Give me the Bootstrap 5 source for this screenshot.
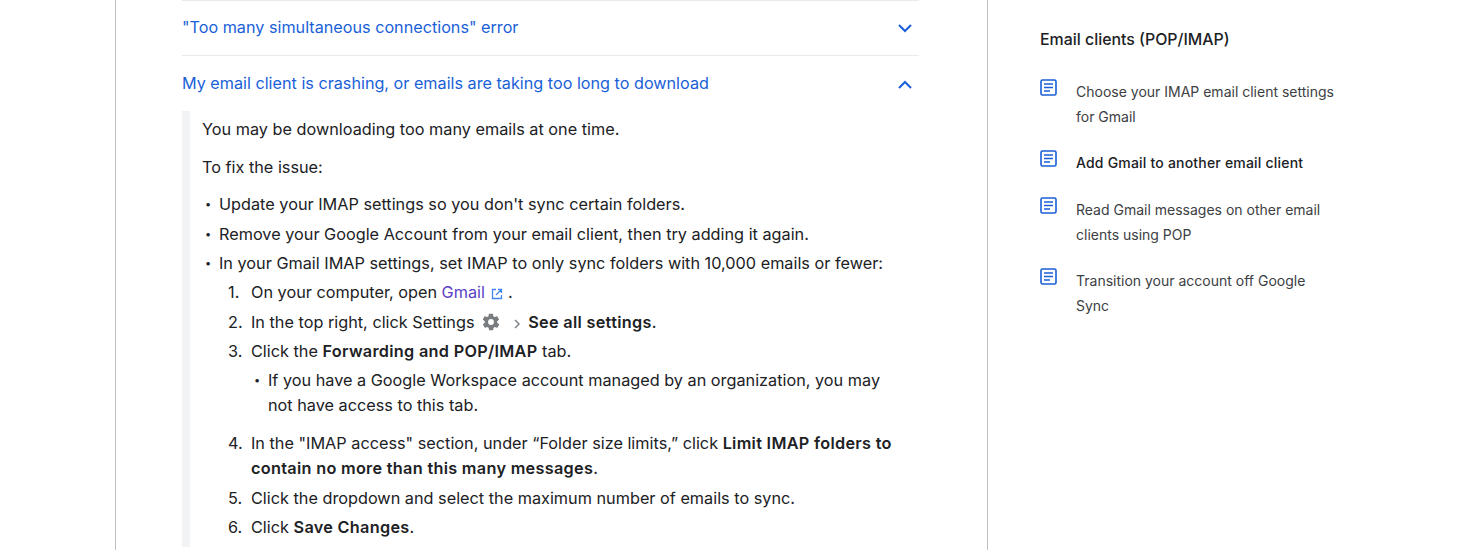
<!DOCTYPE html>
<html lang="en">
<head>
  <meta charset="UTF-8">
  <title>Email client help</title>
  <link href="https://cdn.jsdelivr.net/npm/bootstrap@5.3.3/dist/css/bootstrap.min.css" rel="stylesheet">
  <style>
    html, body { height: 550px; overflow: hidden; background: #fff; }
    body { font-family: Inter, Roboto, "Liberation Sans", sans-serif; color: #202124; font-size: 16.25px; line-height: 25px; }
    .page-wrap { padding-left: 115px; }
    .help-article { width: 873px; height: 550px; padding: 0 68px 0 66px; border-left: 1.5px solid #bdc1c6; border-right: 1.5px solid #bdc1c6; flex: none; }
    .faq-row { height: 55px; border-top: 1px solid #e8eaed; color: #1a5fd8; font-size: 16.2px; padding: 0 6px 0 0; }
    .faq-row svg { width: 16px; height: 10px; }
    .faq-row:first-child span { margin-bottom: 2px; }
    .faq-row.is-open svg { margin-top: 3px; }
    .answer-box { border-left: 8px solid #f1f3f4; margin-top: 1px; padding: 6px 0 0 12px; height: 436px; }
    .answer-box p { margin: 0 0 13px; }
    .answer-box p + p { margin-bottom: 12.3px; }
    .answer-box b { font-weight: 600; letter-spacing: .3px; }
    .step-list, .sub-list { margin: 0; padding: 0; list-style: none; }
    .step-list > li { position: relative; padding-left: 17px; margin-bottom: 4.4px; }
    .step-list > li::before { content: "•"; position: absolute; left: 3px; font-size: 11px; }
    .num-list { margin: 4.4px 0 0; padding: 0 22px 0 0; list-style: none; counter-reset: stp; }
    .num-list > li { position: relative; padding-left: 32px; margin-bottom: 4.4px; counter-increment: stp; }
    .num-list > li::before { content: counter(stp) "."; position: absolute; left: 9px; }
    .sub-list { margin: 4px 0 13px; }
    .sub-list > li { position: relative; padding-left: 17px; padding-right: 4px; }
    .sub-list > li::before { content: "•"; position: absolute; left: 3px; font-size: 11px; }
    .gmail-link { color: #5a3fc4; text-decoration: none; }
    .side-panel { padding: 28px 0 0 52px; width: 350px; font-size: 14px; }
    .side-title { font-size: 15.9px; font-weight: 500; margin: 0 0 27px; line-height: 24px; color: #202124; }
    .side-item { display: flex; margin-bottom: 21.3px; }
    .side-item svg { width: 17px; height: 17px; flex: none; margin: 0 19px 0 0; }
    .side-item span { color: #3c4043; }
    .side-item.current span { font-weight: 500; color: #202124; letter-spacing: .2px; }
    .icon-inl { vertical-align: -3px; }
    .gear-inl { vertical-align: -4px; margin-left: 2px; }
  </style>
</head>
<body>
<div class="page-wrap d-flex">
  <main class="help-article">
    <div class="faq-row d-flex justify-content-between align-items-center">
      <span>"Too many simultaneous connections" error</span>
      <svg viewBox="0 0 16 10"><path d="M2 2l6 6 6-6" fill="none" stroke="#1a5fd8" stroke-width="2"/></svg>
    </div>
    <div class="faq-row is-open d-flex justify-content-between align-items-center">
      <span>My email client is crashing, or emails are taking too long to download</span>
      <svg viewBox="0 0 16 10"><path d="M2 8l6-6 6 6" fill="none" stroke="#1a5fd8" stroke-width="2"/></svg>
    </div>
    <div class="answer-box">
      <p>You may be downloading too many emails at one time.</p>
      <p>To fix the issue:</p>
      <ul class="step-list">
        <li>Update your IMAP settings so you don't sync certain folders.</li>
        <li>Remove your Google Account from your email client, then try adding it again.</li>
        <li>In your Gmail IMAP settings, set IMAP to only sync folders with 10,000 emails or fewer:
          <ol class="num-list">
            <li>On your computer, open <a class="gmail-link" href="#">Gmail</a>
              <svg class="icon-inl" width="14" height="14" viewBox="0 0 14 14"><path d="M6 2.500H2.500v9h9V8M8 2.500h3.500V6M11.500 2.500L6 8" fill="none" stroke="#4285f4" stroke-width="1.300"/></svg> .</li>
            <li>In the top right, click Settings
              <svg class="gear-inl" width="20" height="20" viewBox="0 0 24 24"><path fill="#7a7d80" fill-rule="evenodd" d="M19.400 13c.1-.3.1-.7.1-1s0-.7-.1-1l2.100-1.600c.2-.2.2-.4.1-.6l-2-3.500c-.1-.2-.4-.3-.6-.2l-2.500 1c-.5-.4-1.100-.7-1.700-1l-.4-2.600c0-.3-.2-.5-.5-.5h-4c-.3 0-.5.200-.5.500l-.4 2.600c-.6.3-1.200.6-1.700 1l-2.500-1c-.2-.1-.5 0-.6.200l-2 3.500c-.1.200-.1.400.1.600L4.600 11c0 .3-.1.700-.1 1s0 .7.100 1l-2.100 1.600c-.2.200-.2.400-.1.600l2 3.500c.1.200.4.300.6.200l2.500-1c.5.400 1.100.700 1.700 1l.4 2.600c0 .3.200.5.500.5h4c.3 0 .5-.2.5-.5l.4-2.600c.6-.3 1.200-.6 1.700-1l2.500 1c.2.100.5 0 .6-.2l2-3.500c.1-.2.100-.4-.1-.6zM12 15.500a3.500 3.500 0 1 1 0-7 3.500 3.500 0 0 1 0 7z"/></svg>
              <svg class="icon-inl ms-1" width="14" height="14" viewBox="0 0 14 14"><path d="M5 3l4 4-4 4" fill="none" stroke="#80868b" stroke-width="1.500"/></svg>
              <b>See all settings</b>.</li>
            <li>Click the <b>Forwarding and POP/IMAP</b> tab.
              <ul class="sub-list">
                <li>If you have a Google Workspace account managed by an organization, you may not have access to this tab.</li>
              </ul>
            </li>
            <li>In the "IMAP access" section, under “Folder size limits,” click <b>Limit IMAP folders to</b> <b>contain no more than this many messages</b>.</li>
            <li>Click the dropdown and select the maximum number of emails to sync.</li>
            <li>Click <b>Save Changes</b>.</li>
          </ol>
        </li>
      </ul>
    </div>
  </main>
  <aside class="side-panel">
    <h2 class="side-title">Email clients (POP/IMAP)</h2>
    <div class="side-item"><svg viewBox="0 0 17 17"><rect x="1" y="1" width="15" height="15" rx="1.500" fill="none" stroke="#1a5fd8" stroke-width="1.600"/><path d="M4 5h9M4 8.500h9M4 12h6" fill="none" stroke="#1a5fd8" stroke-width="1.600"/></svg><span>Choose your IMAP email client settings for Gmail</span></div>
    <div class="side-item current"><svg viewBox="0 0 17 17"><rect x="1" y="1" width="15" height="15" rx="1.500" fill="none" stroke="#1a5fd8" stroke-width="1.600"/><path d="M4 5h9M4 8.500h9M4 12h6" fill="none" stroke="#1a5fd8" stroke-width="1.600"/></svg><span>Add Gmail to another email client</span></div>
    <div class="side-item"><svg viewBox="0 0 17 17"><rect x="1" y="1" width="15" height="15" rx="1.500" fill="none" stroke="#1a5fd8" stroke-width="1.600"/><path d="M4 5h9M4 8.500h9M4 12h6" fill="none" stroke="#1a5fd8" stroke-width="1.600"/></svg><span>Read Gmail messages on other email clients using POP</span></div>
    <div class="side-item"><svg viewBox="0 0 17 17"><rect x="1" y="1" width="15" height="15" rx="1.500" fill="none" stroke="#1a5fd8" stroke-width="1.600"/><path d="M4 5h9M4 8.500h9M4 12h6" fill="none" stroke="#1a5fd8" stroke-width="1.600"/></svg><span>Transition your account off Google Sync</span></div>
  </aside>
</div>
<script src="https://cdn.jsdelivr.net/npm/bootstrap@5.3.3/dist/js/bootstrap.bundle.min.js"></script>
</body>
</html>
